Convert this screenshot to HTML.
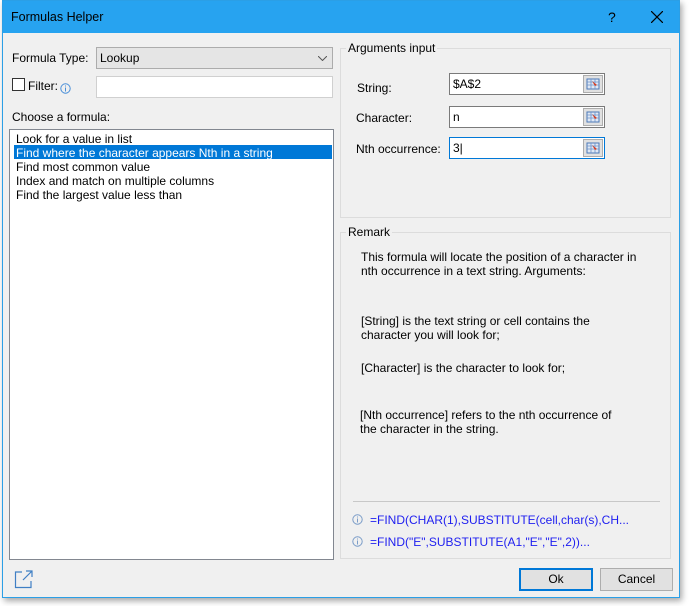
<!DOCTYPE html>
<html><head><style>
*{box-sizing:border-box;margin:0;padding:0}
body{width:689px;height:606px;background:#fff;font-family:"Liberation Sans",sans-serif;font-size:12px;color:#000;position:relative;overflow:hidden}
.win{position:absolute;left:2px;top:0;width:678px;height:598px;background:#f0f0f0;border:1px solid #2b9fe6;box-shadow:2px 3px 6px rgba(0,0,0,.35)}
.a{position:absolute;white-space:nowrap}
.title{position:absolute;left:0;top:0;width:676px;height:32px;background:#27a3f0}
.inp{position:absolute;background:#fff;border:1px solid #a0a0a0}
.grp{position:absolute;border:1px solid #dcdcdc}
.lbl{position:absolute;background:#f0f0f0;padding:0 2px}
.btn{position:absolute;background:#e1e1e1;border:1px solid #adadad;text-align:center;line-height:20px}
.ref{position:absolute;right:1px;top:1px;width:20px;height:18px;background:#e1e1e1;border:1px solid #adadad}
.blue{color:#1e1ef0}
</style></head><body>
<div class="win">
 <div class="title"></div>
 <div class="a" style="left:8px;top:9px;font-size:12.5px">Formulas Helper</div>
 <div class="a" style="left:605px;top:8px;font-size:14px">?</div>
 <svg class="a" style="left:648px;top:10px" width="12" height="12"><path d="M0 0L12 12M12 0L0 12" stroke="#000" stroke-width="1.2"/></svg>

 <div class="a" style="left:9px;top:50px">Formula Type:</div>
 <div class="inp" style="left:93px;top:46px;width:237px;height:22px;background:#e5e5e5;border-color:#acacac"></div>
 <div class="a" style="left:97px;top:50px">Lookup</div>
 <svg class="a" style="left:315px;top:55px" width="9" height="5"><path d="M0 0L4.5 4.5L9 0" stroke="#555" fill="none"/></svg>

 <div class="a" style="left:9px;top:77px;width:13px;height:13px;border:1px solid #333;background:#fff"></div>
 <div class="a" style="left:25px;top:78px">Filter:</div>
 <svg class="a" style="left:57px;top:82px" width="11" height="11"><circle cx="5.5" cy="5.5" r="4.7" fill="none" stroke="#4a8fd8"/><path d="M5.5 4.5V8.5M5.5 2.5V3.5" stroke="#4a8fd8"/></svg>
 <div class="inp" style="left:93px;top:75px;width:237px;height:22px;border-color:#d0d0d0"></div>

 <div class="a" style="left:9px;top:109px">Choose a formula:</div>
 <div class="inp" style="left:6px;top:128px;width:325px;height:431px;border-color:#828790"></div>
 <div class="a" style="left:11px;top:144px;width:318px;height:14px;background:#0078d7"></div>
 <div class="a" style="left:13px;top:131px;line-height:14px">Look for a value in list<br><span style="color:#fff">Find where the character appears Nth in a string</span><br>Find most common value<br>Index and match on multiple columns<br>Find the largest value less than</div>

 <div class="grp" style="left:337px;top:47px;width:331px;height:170px"></div>
 <div class="lbl" style="left:343px;top:40px">Arguments input</div>
 <div class="a" style="left:354px;top:80px">String:</div>
 <div class="a" style="left:353px;top:110px">Character:</div>
 <div class="a" style="left:353px;top:141px">Nth occurrence:</div>
 <div class="inp" style="left:446px;top:72px;width:156px;height:22px;border-color:#7a7a7a"><span class="a" style="left:3px;top:3px">$A$2</span><div class="ref"><svg width="18" height="16"><rect x="3" y="3" width="12" height="10" fill="#dfe8f5" stroke="#4c79b8"/><path d="M3 6H15M3 9H15M7 3V13M11 3V13" stroke="#6d92c8" stroke-width=".8"/><path d="M8 5L13 9L11 10Z" fill="#d83a1d"/></svg></div></div>
 <div class="inp" style="left:446px;top:105px;width:156px;height:22px;border-color:#7a7a7a"><span class="a" style="left:3px;top:3px">n</span><div class="ref"><svg width="18" height="16"><rect x="3" y="3" width="12" height="10" fill="#dfe8f5" stroke="#4c79b8"/><path d="M3 6H15M3 9H15M7 3V13M11 3V13" stroke="#6d92c8" stroke-width=".8"/><path d="M8 5L13 9L11 10Z" fill="#d83a1d"/></svg></div></div>
 <div class="inp" style="left:446px;top:136px;width:156px;height:22px;border-color:#0078d7"><span class="a" style="left:3px;top:3px">3|</span><div class="ref"><svg width="18" height="16"><rect x="3" y="3" width="12" height="10" fill="#dfe8f5" stroke="#4c79b8"/><path d="M3 6H15M3 9H15M7 3V13M11 3V13" stroke="#6d92c8" stroke-width=".8"/><path d="M8 5L13 9L11 10Z" fill="#d83a1d"/></svg></div></div>

 <div class="grp" style="left:337px;top:231px;width:331px;height:327px"></div>
 <div class="lbl" style="left:343px;top:224px">Remark</div>
 <div class="a" style="left:358px;top:249px;line-height:14px">This formula will locate the position of a character in<br>nth occurrence in a text string. Arguments:</div>
 <div class="a" style="left:358px;top:313px;line-height:14px">[String] is the text string or cell contains the<br>character you will look for;</div>
 <div class="a" style="left:358px;top:360px">[Character] is the character to look for;</div>
 <div class="a" style="left:357px;top:407px;line-height:14px">[Nth occurrence] refers to the nth occurrence of<br>the character in the string.</div>
 <div class="a" style="left:350px;top:500px;width:307px;height:1px;background:#c8c8c8"></div>
 <svg class="a" style="left:349px;top:513px" width="11" height="11"><circle cx="5.5" cy="5.5" r="4.7" fill="none" stroke="#7a9cc8"/><path d="M5.5 4.5V8.5M5.5 2.5V3.5" stroke="#7a9cc8"/></svg>
 <div class="a blue" style="left:367px;top:512px">=FIND(CHAR(1),SUBSTITUTE(cell,char(s),CH...</div>
 <svg class="a" style="left:349px;top:535px" width="11" height="11"><circle cx="5.5" cy="5.5" r="4.7" fill="none" stroke="#7a9cc8"/><path d="M5.5 4.5V8.5M5.5 2.5V3.5" stroke="#7a9cc8"/></svg>
 <div class="a blue" style="left:367px;top:534px">=FIND("E",SUBSTITUTE(A1,"E","E",2))...</div>

 <svg class="a" style="left:11px;top:568px" width="20" height="20"><path d="M8 3H1.5V18.5H17V12" stroke="#3f7fc4" fill="none" stroke-width="1.2"/><path d="M9 11L18 2M12 2H18V8" stroke="#3f7fc4" fill="none" stroke-width="1.2"/></svg>
 <div class="btn" style="left:516px;top:567px;width:74px;height:23px;border:2px solid #0078d7;line-height:19px">Ok</div>
 <div class="btn" style="left:597px;top:567px;width:73px;height:23px">Cancel</div>
</div>
</body></html>
